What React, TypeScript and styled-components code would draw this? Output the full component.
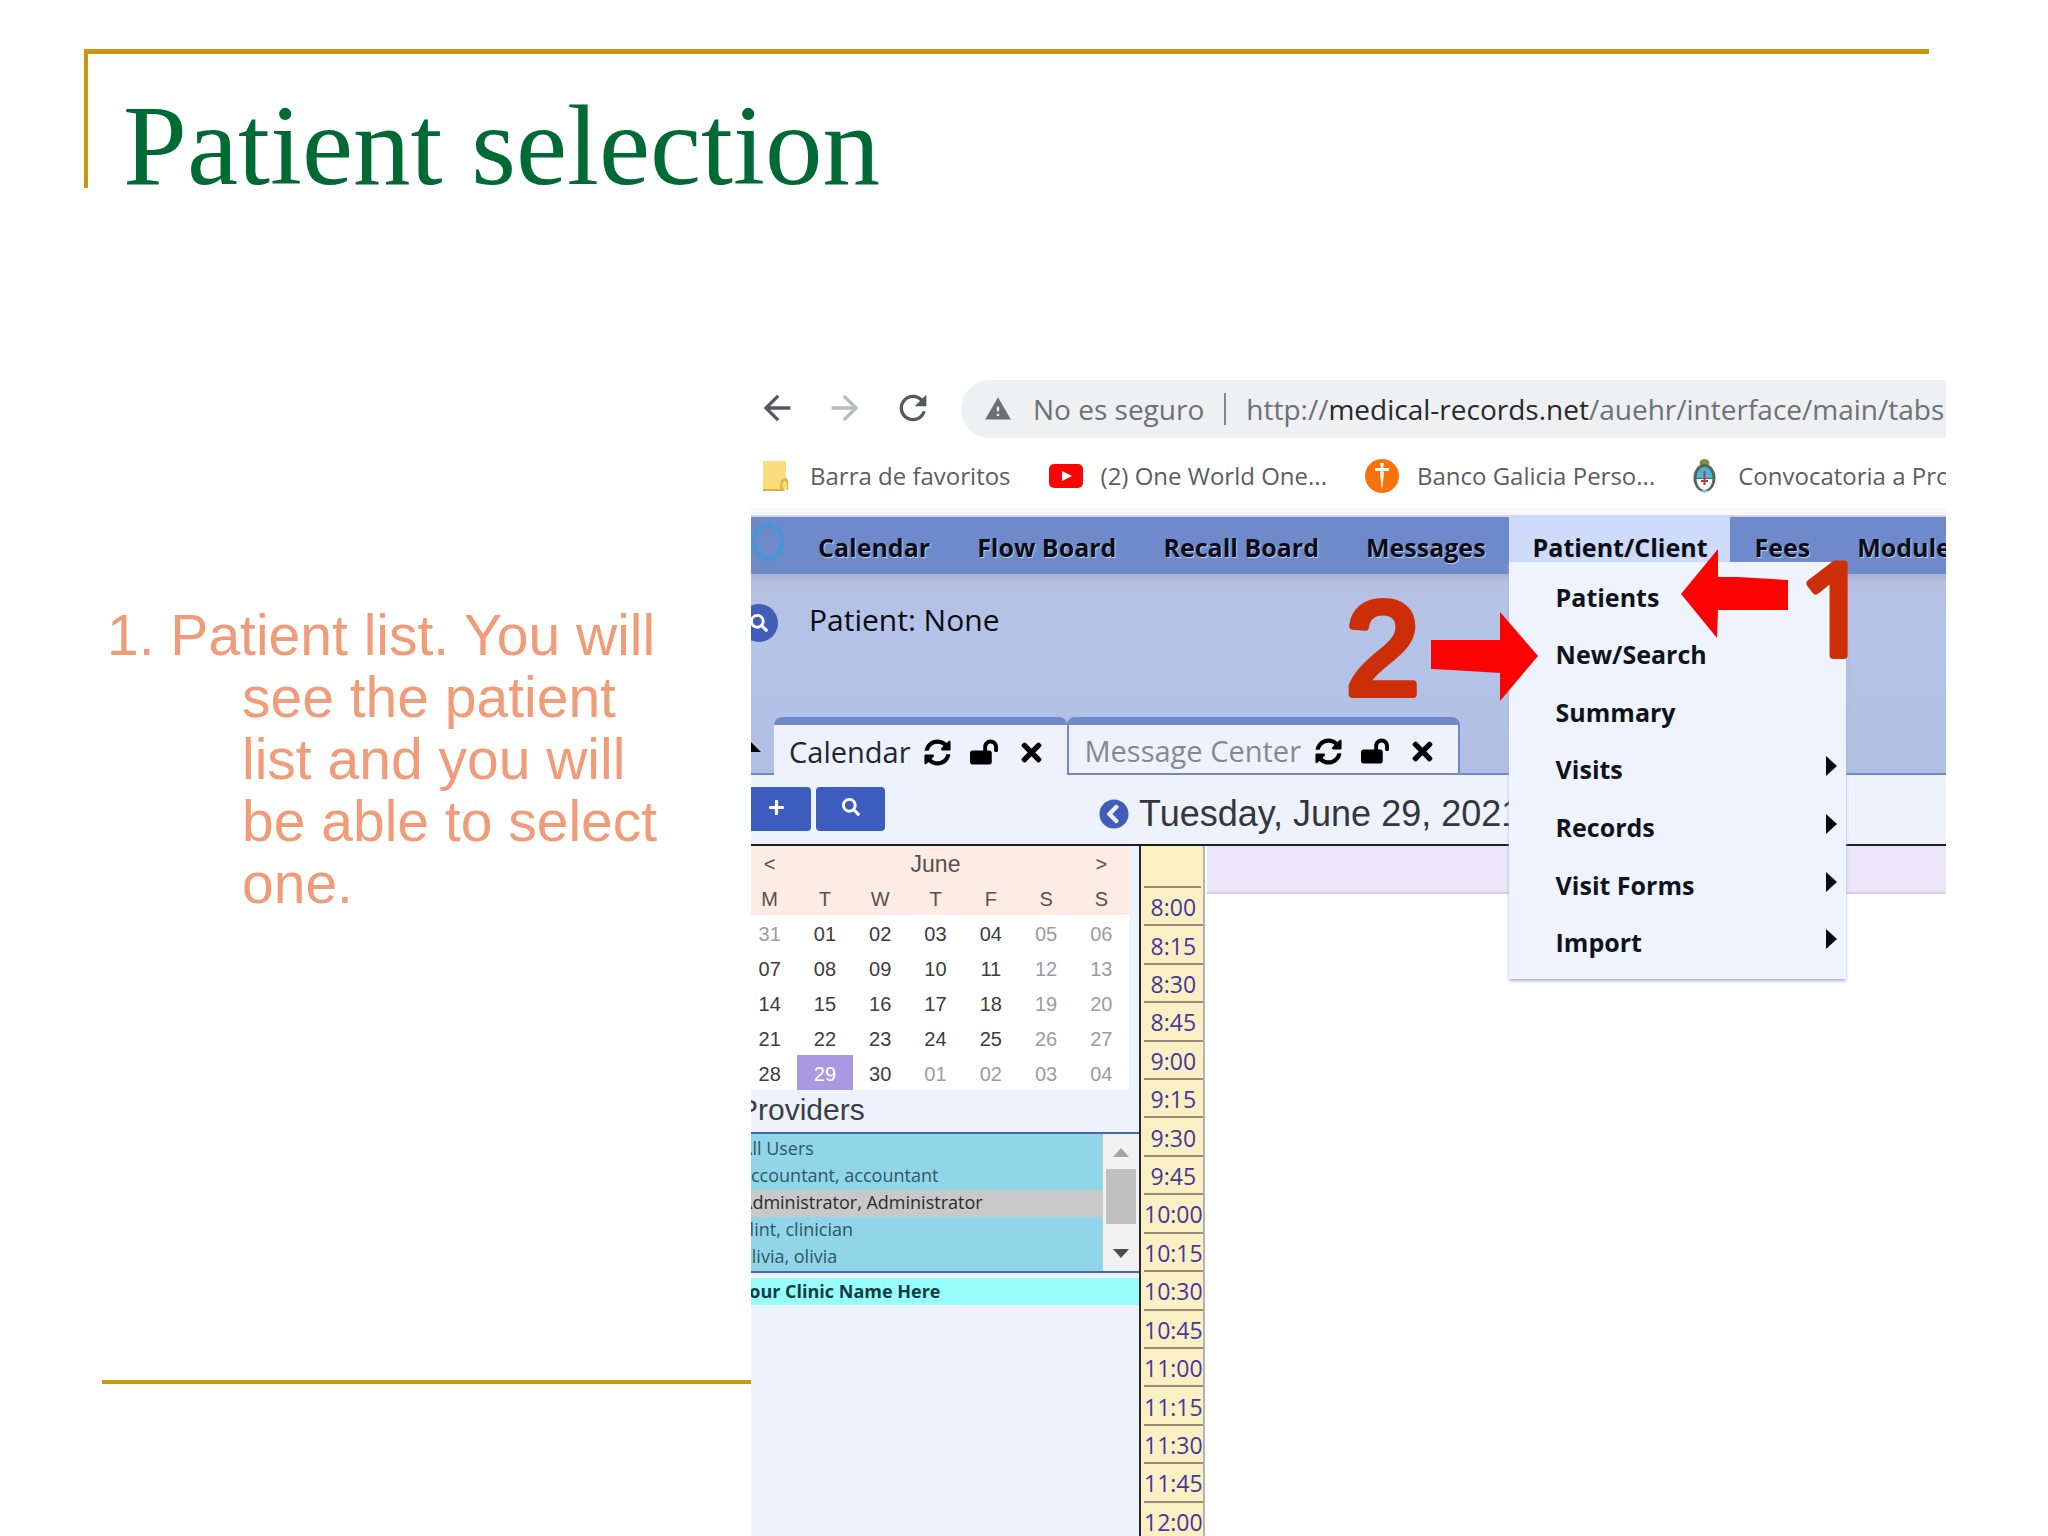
import React from "react";
import styled, { createGlobalStyle } from "styled-components";
import {
  FaSyncAlt,
  FaLockOpen,
  FaTimes,
  FaSearch,
  FaPlus,
  FaChevronCircleLeft,
} from "react-icons/fa";
import { MdArrowBack, MdArrowForward, MdRefresh, MdWarning } from "react-icons/md";

const ui = `"Open Sans", "Noto Sans", sans-serif`;
const arial = `"Liberation Sans", Arial, sans-serif`;
const gold = "#c9980e";
const navBlue = "#6f8acb";
const panel = "#eef2fd";

const GlobalStyle = createGlobalStyle`
  * { box-sizing: border-box; }
  body { margin: 0; background: #fff; font-family: ${ui}; }
  button { border: 0; padding: 0; margin: 0; background: none; font: inherit; color: inherit; cursor: pointer; }
  a { color: inherit; text-decoration: none; }
  ul { list-style: none; margin: 0; padding: 0; }
  svg { display: block; flex: none; }
`;

/* ---------- slide ---------- */

const Slide = styled.main`
  display: flex;
  flex-direction: column;
  height: 100vh;
  overflow: hidden;
  background: #fff;
`;

const SlideHeader = styled.header`
  margin: 49px 119px 0 84px;
  height: 139px;
  flex: none;
  position: relative;
  border-top: 5px solid ${gold};

  &::before {
    content: "";
    position: absolute;
    left: 0;
    top: 0;
    bottom: 0;
    border-left: 4px solid ${gold};
  }
`;

const Title = styled.h1`
  margin: 0;
  padding: 32px 0 0 39px;
  font: 400 115px/120px "Liberation Serif", "Times New Roman", serif;
  color: #006a35;
  white-space: nowrap;
`;

const SlideBody = styled.div`
  display: grid;
  grid-template-columns: 751fr 1195fr;
  flex: 1;
  min-height: 0;
  margin-top: 190px;
  padding-right: 102px;
`;

const Notes = styled.section`
  display: flex;
  flex-direction: column;
  min-width: 0;
  padding: 226px 0 152px 102px;
`;

const Note = styled.p`
  margin: 0;
  padding: 0 60px 0 140px;
  text-indent: -135px;
  font: 400 57px/62px ${arial};
  color: #f09c78;
`;

const Rule = styled.hr`
  width: 100%;
  height: 4px;
  margin: auto 0 0;
  border: 0;
  background: ${gold};
`;

/* ---------- browser ---------- */

const Browser = styled.section`
  position: relative;
  display: flex;
  flex-direction: column;
  min-width: 0;
  overflow: hidden;
`;

const Toolbar = styled.div`
  display: flex;
  flex: none;
  align-items: center;
  gap: 28px;
  height: 60px;
  padding: 2px 0 0 6px;
`;

const ToolButton = styled.button<{ $faded?: boolean }>`
  flex: none;
  padding-bottom: 2px;
  color: ${(p) => (p.$faded ? "#b9bbbd" : "#55585c")};
`;

const Address = styled.div`
  display: flex;
  flex: 1;
  min-width: 0;
  align-items: center;
  height: 58px;
  padding-left: 23px;
  overflow: hidden;
  border-radius: 29px 0 0 29px;
  background: #eef0f1;
  color: #6d7175;
  font-size: 28px;
  line-height: 40px;
  white-space: nowrap;
`;

const Security = styled.span`
  padding: 0 20px 0 21px;
`;

const Url = styled.span`
  padding-left: 20px;
  border-left: 2px solid #85888b;
  line-height: 32px;

  b {
    font-weight: 400;
    color: #26282b;
  }
`;

const Bookmarks = styled.nav`
  display: flex;
  flex: none;
  align-items: center;
  gap: 38px;
  height: 77px;
  padding: 5px 0 0 11px;
  border-bottom: 7px solid #f8f8fa;
`;

const Bookmark = styled.a<{ $gap: number }>`
  display: flex;
  align-items: center;
  gap: ${(p) => p.$gap}px;
  font-size: 24px;
  line-height: 32px;
  color: #5b5d60;
  white-space: nowrap;
`;

/* ---------- application ---------- */

const MenuBar = styled.nav`
  display: flex;
  flex: none;
  height: 59px;
  border-top: 2px solid #cdd7f0;
  background: ${navBlue};
`;

const Logo = styled.div`
  width: 43px;
  flex: none;
  padding-top: 5px;
`;

const MenuItem = styled.div<{ $open?: boolean }>`
  position: relative;
  flex: none;
  background: ${(p) => (p.$open ? "#cedbfa" : "transparent")};
`;

const MenuButton = styled.button`
  height: 57px;
  padding: 3px 23px 0 24px;
  font-weight: 700;
  font-size: 25px;
  line-height: 34px;
  color: #0b0d16;
  text-shadow: 1px 1px 1px #c4cfec;
  white-space: nowrap;
`;

const Dropdown = styled.ul`
  position: absolute;
  z-index: 2;
  left: 0;
  top: 45px;
  display: grid;
  grid-auto-rows: 1fr;
  width: 337px;
  height: 417px;
  padding: 6px 0 8px;
  background: #eff3fd;
  box-shadow: 0 2px 3px #a9b2dd;
`;

const DropdownButton = styled.button`
  display: flex;
  align-items: center;
  justify-content: space-between;
  width: 100%;
  height: 100%;
  padding: 0 9px 0 47px;
  font-weight: 700;
  font-size: 25px;
  line-height: 34px;
  color: #10131c;
`;

const Caret = styled.span`
  margin-bottom: 6px;
  border-left: 11px solid #080a10;
  border-top: 10px solid transparent;
  border-bottom: 10px solid transparent;
`;

const PatientArea = styled.div`
  display: flex;
  flex: none;
  flex-direction: column;
  height: 201px;
  padding-top: 30px;
  background: linear-gradient(#a8b0cb, #b5c1e3 9px, #b4c3e8 60px, #b1bfe4);
`;

const PatientRow = styled.div`
  display: flex;
  align-items: flex-start;
  gap: 31px;
  height: 38px;
  font-weight: 500;
  font-size: 30px;
  line-height: 32px;
  color: #080a10;
`;

const RoundButton = styled.button`
  display: grid;
  place-items: center;
  width: 38px;
  height: 38px;
  margin-left: -11px;
  border-radius: 50%;
  background: #405db8;
  color: #fff;
`;

const Tabs = styled.div`
  display: flex;
  margin-top: auto;
  height: 58px;
`;

const TabEdge = styled.div<{ $grow?: boolean }>`
  flex: ${(p) => (p.$grow ? "1" : "0 0 23px")};
  padding-top: 25px;
  border-bottom: 2px solid #7189c6;
`;

const Collapse = styled.button`
  display: block;
  margin-left: -10px;
  border-bottom: 10px solid #000;
  border-left: 10px solid transparent;
  border-right: 10px solid transparent;
`;

const Tab = styled.div<{ $active?: boolean }>`
  display: flex;
  flex: none;
  align-items: center;
  padding: 4px 21px 0 15px;
  border: solid #7189c6;
  border-width: ${(p) => (p.$active ? "8px 0 0 0" : "8px 2px 2px 2px")};
  border-radius: 8px 8px 0 0;
  background: ${panel};
  color: ${(p) => (p.$active ? "#23262b" : "#85898f")};
  font-size: 29px;
  line-height: 40px;
  white-space: nowrap;
`;

const TabIcons = styled.span`
  display: flex;
  align-items: center;
  gap: 19px;
  padding-left: 14px;
  color: #000;
`;

const ActionRow = styled.div`
  display: flex;
  flex: none;
  height: 71px;
  padding-top: 12px;
  border-bottom: 2px solid #1c1f24;
  background: ${panel};
`;

const ActionButton = styled.button<{ $first?: boolean }>`
  display: grid;
  place-items: center;
  width: 69px;
  height: 44px;
  margin-left: ${(p) => (p.$first ? "-9px" : "5px")};
  padding-bottom: 4px;
  border-radius: 4px;
  background: #3c5cbe;
  color: #fff;
`;

const DayHeading = styled.div`
  display: flex;
  align-items: center;
  gap: 10px;
  height: 54px;
  margin-left: 214px;
  color: #405db8;
`;

const DayTitle = styled.h2`
  margin: 0;
  font: 400 36px/40px ${arial};
  color: #33373c;
  white-space: nowrap;
`;

const Workspace = styled.div`
  display: grid;
  grid-template-columns: 390px 64px 1fr;
  flex: 1;
  min-height: 0;
`;

const Sidebar = styled.aside`
  min-width: 0;
  overflow: hidden;
  border-right: 2px solid #23272f;
  background: ${panel};
`;

const MonthTable = styled.table`
  width: 387px;
  margin-left: -9px;
  table-layout: fixed;
  border-collapse: collapse;
  background: #fff;
  font: 400 20px/24px ${arial};
  color: #3c3c3f;

  thead {
    background: #fdece4;
  }
  tr {
    height: 35px;
  }
  thead tr:first-child {
    height: 34px;
  }
  th {
    font-weight: 400;
    color: #55504f;
  }
  th,
  td {
    padding: 2px 0 0;
    text-align: center;
  }
`;

const MonthName = styled.th`
  font-size: 23px;
`;

const Day = styled.td<{ $muted?: boolean; $today?: boolean }>`
  background: ${(p) => (p.$today ? "#a899e2" : "transparent")};
  color: ${(p) => (p.$today ? "#fff" : p.$muted ? "#9c9c9f" : "inherit")};
`;

const ProvidersTitle = styled.label`
  display: block;
  margin-left: -13px;
  padding: 3px 0 5px;
  font: 400 30px/34px ${arial};
  color: #3a3e44;
`;

const ProviderBox = styled.div`
  display: flex;
  height: 141px;
  border: solid #4467a8;
  border-width: 2px 0;
`;

const ProviderList = styled.select`
  flex: 1;
  min-width: 0;
  height: 137px;
  margin: 0 0 0 -12px;
  padding: 2px 0 0;
  border: 0;
  border-radius: 0;
  outline: 0;
  overflow: hidden;
  scrollbar-width: none;
  background: #91d5e8;
  font: 400 18px/27px ${ui};
  color: #2f5664;

  option {
    min-height: 27px;
    padding: 0 2px;
    line-height: 27px;
  }
  option:checked {
    background: #c9c9c9;
    color: #2c2c2c;
  }
`;

const ScrollBar = styled.div`
  display: flex;
  flex-direction: column;
  align-items: center;
  width: 36px;
  padding: 14px 0 13px;
  background: #f1f1f1;
`;

const ScrollArrow = styled.span<{ $down?: boolean }>`
  border-left: 8px solid transparent;
  border-right: 8px solid transparent;
  ${(p) => (p.$down ? "border-top: 9px solid #4d4d4d; margin-top: auto;" : "border-bottom: 9px solid #a3a3a3;")}
`;

const ScrollThumb = styled.span`
  width: 30px;
  height: 55px;
  margin-top: 12px;
  background: #c1c1c1;
`;

const Clinic = styled.div`
  margin-top: 5px;
  background: #97fefc;
  color: #143c40;
  font-weight: 700;
  font-size: 18px;
  line-height: 27px;
  text-indent: -13px;
`;

const TimeColumn = styled.div`
  display: flex;
  flex-direction: column;
  padding: 0 2px 0 3px;
  border-right: 2px solid #b5b3ad;
  background: #fbf0c4;
`;

const TimeHead = styled.div`
  flex: none;
  height: 42px;
  border-bottom: 2px solid #988e78;
`;

const TimeSlots = styled.ul`
  display: grid;
  flex: none;
  grid-auto-rows: 1fr;
  height: 653px;
`;

const TimeSlot = styled.li`
  display: flex;
  align-items: center;
  justify-content: center;
  padding-top: 2px;
  border-bottom: 2px solid #988e78;
  font-size: 23px;
  line-height: 30px;
  color: #46379e;
`;

const Schedule = styled.div`
  background: #fff;
`;

const ScheduleHead = styled.div`
  height: 48px;
  margin-left: 2px;
  border-bottom: 2px solid #d5d1e2;
  background: #eae6f7;
`;

const Annotations = styled.svg`
  position: absolute;
  z-index: 3;
  left: 597px;
  top: 170px;
  pointer-events: none;
`;

/* ---------- pictures ---------- */

const Folder = () => (
  <svg width="26" height="31" viewBox="0 0 26 31">
    <path d="M1 1h23v19l2 3v7H1z" fill="#fbdd80" />
    <path d="M1 30h20l-2-3 1-6 4-2 2 4v7" fill="none" stroke="#dcb13f" strokeWidth="2" />
  </svg>
);

const YouTube = () => (
  <svg width="34" height="24" viewBox="0 0 34 24">
    <rect width="34" height="24" rx="5" fill="#f80606" />
    <path d="M13 7l10 5-10 5z" fill="#fff" />
  </svg>
);

const Galicia = () => (
  <svg width="34" height="34" viewBox="0 0 34 34">
    <circle cx="17" cy="17" r="17" fill="#f8730d" />
    <path d="M15 4h4l-1 5h6v3h-6l1 2-2 17-2-17 1-2h-6V9h6z" fill="#fff" />
  </svg>
);

const Shield = () => (
  <svg width="23" height="34" viewBox="0 0 23 34">
    <ellipse cx="11.5" cy="4" rx="5" ry="4" fill="#8b8a3c" />
    <ellipse cx="11.5" cy="19" rx="11" ry="14" fill="#4d6b52" />
    <path d="M3.500 19a8 11 0 0 1 16 0z" fill="#4fb3d9" />
    <path d="M3.500 20a8 11 0 0 0 16 0z" fill="#f4f6f7" />
    <path d="M11.500 12v14M8 22l7 0" stroke="#a8443a" strokeWidth="2" />
    <path d="M8 31l3.500 3 3.500-3z" fill="#7fc4de" />
  </svg>
);

const Ring = () => (
  <svg width="36" height="40" viewBox="0 0 36 40">
    <ellipse cx="17" cy="20" rx="14" ry="17" fill="none" stroke="#4795d4" strokeWidth="5" strokeDasharray="14 2" />
  </svg>
);

/* ---------- data ---------- */

const providers = [
  "All Users",
  "accountant, accountant",
  "Administrator, Administrator",
  "clint, clinician",
  "olivia, olivia",
];

const weekdays = ["M", "T", "W", "T", "F", "S", "S"];

const weeks = [
  ["31", "01", "02", "03", "04", "05", "06"],
  ["07", "08", "09", "10", "11", "12", "13"],
  ["14", "15", "16", "17", "18", "19", "20"],
  ["21", "22", "23", "24", "25", "26", "27"],
  ["28", "29", "30", "01", "02", "03", "04"],
];

const times = Array.from({ length: 17 }, (_, i) => {
  const minutes = (i % 4) * 15;
  return `${8 + Math.floor(i / 4)}:${minutes === 0 ? "00" : minutes}`;
});

const patientMenu = [
  { label: "Patients" },
  { label: "New/Search" },
  { label: "Summary" },
  { label: "Visits", more: true },
  { label: "Records", more: true },
  { label: "Visit Forms", more: true },
  { label: "Import", more: true },
];

const menus = ["Calendar", "Flow Board", "Recall Board", "Messages", "Patient/Client", "Fees", "Modules"];

const isMuted = (week: number, day: number) =>
  day > 4 || (week === 0 && day === 0) || (week === 4 && day > 2);

const TabItem = ({ label, active }: { label: string; active?: boolean }) => (
  <Tab $active={active}>
    <span>{label}</span>
    <TabIcons>
      <button aria-label={`Refresh ${label}`}><FaSyncAlt size={27} /></button>
      <button aria-label={`Unlock ${label}`}><FaLockOpen size={28} /></button>
      <button aria-label={`Close ${label}`}><FaTimes size={29} /></button>
    </TabIcons>
  </Tab>
);

export default function App() {
  return (
    <Slide>
      <GlobalStyle />
      <SlideHeader>
        <Title>Patient selection</Title>
      </SlideHeader>
      <SlideBody>
        <Notes>
          <Note>1. Patient list. You will see the patient list and you will be able to select one.</Note>
          <Rule />
        </Notes>
        <Browser>
          <Toolbar>
            <ToolButton aria-label="Back"><MdArrowBack size={40} /></ToolButton>
            <ToolButton aria-label="Forward" $faded><MdArrowForward size={40} /></ToolButton>
            <ToolButton aria-label="Reload"><MdRefresh size={40} /></ToolButton>
            <Address>
              <MdWarning size={28} />
              <Security>No es seguro</Security>
              <Url>http://<b>medical-records.net</b>/auehr/interface/main/tabs</Url>
            </Address>
          </Toolbar>
          <Bookmarks>
            <Bookmark href="#" $gap={22}><Folder />Barra de favoritos</Bookmark>
            <Bookmark href="#" $gap={18}><YouTube />(2) One World One...</Bookmark>
            <Bookmark href="#" $gap={18}><Galicia />Banco Galicia Perso...</Bookmark>
            <Bookmark href="#" $gap={22}><Shield />Convocatoria a Pro</Bookmark>
          </Bookmarks>
          <MenuBar>
            <Logo><Ring /></Logo>
            {menus.map((menu) => (
              <MenuItem key={menu} $open={menu === "Patient/Client"}>
                <MenuButton>{menu}</MenuButton>
                {menu === "Patient/Client" && (
                  <Dropdown>
                    {patientMenu.map((item) => (
                      <li key={item.label}>
                        <DropdownButton>
                          {item.label}
                          {item.more && <Caret />}
                        </DropdownButton>
                      </li>
                    ))}
                  </Dropdown>
                )}
              </MenuItem>
            ))}
          </MenuBar>
          <PatientArea>
            <PatientRow>
              <RoundButton aria-label="Find patient"><FaSearch size={18} /></RoundButton>
              Patient: None
            </PatientRow>
            <Tabs>
              <TabEdge><Collapse aria-label="Collapse" /></TabEdge>
              <TabItem label="Calendar" active />
              <TabItem label="Message Center" />
              <TabEdge $grow />
            </Tabs>
          </PatientArea>
          <ActionRow>
            <ActionButton $first aria-label="Add"><FaPlus size={17} /></ActionButton>
            <ActionButton aria-label="Search"><FaSearch size={18} /></ActionButton>
            <DayHeading>
              <button aria-label="Previous day"><FaChevronCircleLeft size={30} /></button>
              <DayTitle>Tuesday, June 29, 2021</DayTitle>
            </DayHeading>
          </ActionRow>
          <Workspace>
            <Sidebar>
              <MonthTable>
                <thead>
                  <tr>
                    <th><button aria-label="Previous month">&lt;</button></th>
                    <MonthName colSpan={5}>June</MonthName>
                    <th><button aria-label="Next month">&gt;</button></th>
                  </tr>
                  <tr>{weekdays.map((d, i) => <th key={i}>{d}</th>)}</tr>
                </thead>
                <tbody>
                  {weeks.map((week, w) => (
                    <tr key={w}>
                      {week.map((day, d) => (
                        <Day key={d} $muted={isMuted(w, d)} $today={day === "29"}>{day}</Day>
                      ))}
                    </tr>
                  ))}
                </tbody>
              </MonthTable>
              <ProvidersTitle htmlFor="providers">Providers</ProvidersTitle>
              <ProviderBox>
                <ProviderList id="providers" multiple size={5} defaultValue={[providers[2]]}>
                  {providers.map((name) => <option key={name} value={name}>{name}</option>)}
                </ProviderList>
                <ScrollBar>
                  <ScrollArrow />
                  <ScrollThumb />
                  <ScrollArrow $down />
                </ScrollBar>
              </ProviderBox>
              <Clinic>Your Clinic Name Here</Clinic>
            </Sidebar>
            <TimeColumn>
              <TimeHead />
              <TimeSlots>
                {times.map((time) => <TimeSlot key={time}>{time}</TimeSlot>)}
              </TimeSlots>
            </TimeColumn>
            <Schedule><ScheduleHead /></Schedule>
          </Workspace>
          <Annotations width="520" height="170" viewBox="1348 548 520 170">
            <path d="M1681 594L1718 549V577L1738 577L1788 580V610H1718L1717 638z" fill="#fb0303" />
            <path d="M1431 640H1500V612L1538 656L1500 701V673L1452 670L1431 669z" fill="#fb0303" />
            <g fill="#cc2f08" stroke="#cc2f08" strokeWidth="8" strokeLinejoin="round">
              <text x="1346" y="694" fontSize="132" fontFamily="Liberation Sans, Arial, sans-serif">2</text>
              <text x="1799" y="655" fontSize="127" fontFamily="Open Sans, sans-serif">1</text>
            </g>
          </Annotations>
        </Browser>
      </SlideBody>
    </Slide>
  );
}
